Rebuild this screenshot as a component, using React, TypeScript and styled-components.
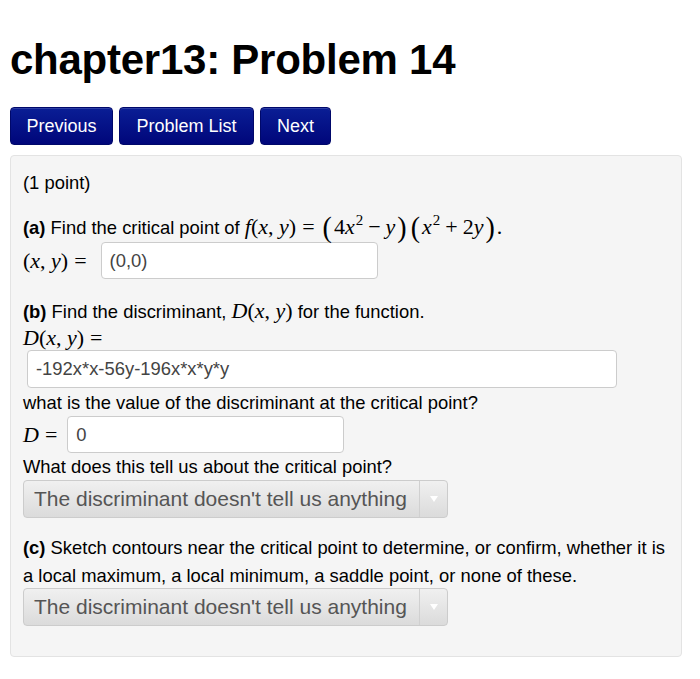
import React from "react";
import styled, { createGlobalStyle } from "styled-components";

const Global = createGlobalStyle`
  html, body { margin: 0; padding: 0; background: #fff; }
  body { font-family: "Liberation Sans", Arial, sans-serif; color: #000; }
`;

const Page = styled.div`
  padding: 0 18px 0 10px;
  width: 700px;
  box-sizing: border-box;
`;

const Title = styled.h1`
  margin: 0;
  padding-top: 37px;
  font-size: 42px;
  line-height: 46px;
  font-weight: bold;
  letter-spacing: -0.25px;
`;

const Nav = styled.div`
  display: flex;
  gap: 6px;
  margin-top: 24px;
`;

const NavButton = styled.button<{ $w: number }>`
  width: ${(p) => p.$w}px;
  height: 38px;
  border: 1px solid #00086a;
  border-radius: 4px;
  background: linear-gradient(#0a1e95, #00067a);
  color: #fff;
  font-family: "Liberation Sans", Arial, sans-serif;
  font-size: 18px;
  padding: 0;
  box-shadow: inset 0 1px 0 rgba(255, 255, 255, 0.15);
`;

const Panel = styled.div`
  margin-top: 10px;
  background: #f5f5f5;
  border: 1px solid #e3e3e3;
  border-radius: 4px;
  padding: 14px 15px 30px 12px;
  font-size: 18.4px;
  line-height: 26px;
`;

const Para = styled.div<{ $mt?: number; $lh?: number }>`
  margin-top: ${(p) => p.$mt ?? 0}px;
  ${(p) => (p.$lh ? `line-height: ${p.$lh}px;` : "")}
`;

const Math = styled.span`
  font-family: "Liberation Serif", "Times New Roman", serif;
  font-size: 22px;
`;

const I = styled.i`
  font-style: italic;
`;

const BigParen = styled.span`
  font-family: "Liberation Serif", serif;
  font-size: 28px;
  display: inline-block;
  transform: scaleY(1.08);
  vertical-align: -2px;
  line-height: 20px;
  padding: 0 2px;
`;

const Op = styled.span<{ $pad?: number }>`
  padding: 0 ${(p) => p.$pad ?? 6}px;
`;

const Row = styled.div<{ $mt?: number; $gap?: number }>`
  display: flex;
  align-items: center;
  gap: ${(p) => p.$gap ?? 6}px;
  margin-top: ${(p) => p.$mt ?? 0}px;
`;

const Input = styled.div<{ $w: number; $ml?: number; $h?: number }>`
  width: ${(p) => p.$w}px;
  height: ${(p) => p.$h ?? 37}px;
  box-sizing: border-box;
  margin-left: ${(p) => p.$ml ?? 0}px;
  background: #fff;
  border: 1px solid #ccc;
  border-radius: 4px;
  padding: 0 8px;
  display: flex;
  align-items: center;
  font-size: 18.4px;
  color: #444;
`;

const Select = styled.div<{ $mt?: number }>`
  width: 425px;
  height: 38px;
  box-sizing: border-box;
  border: 1px solid #ccc;
  border-radius: 4px;
  background: linear-gradient(#f0f0f0, #dbdbdb);
  display: flex;
  align-items: stretch;
  margin-top: ${(p) => p.$mt ?? 0}px;
`;

const SelectText = styled.div`
  flex: 1;
  display: flex;
  align-items: center;
  padding-left: 10px;
  font-size: 21px;
  color: #555;
`;

const SelectArrow = styled.div`
  width: 27px;
  border-left: 1px solid #d0d0d0;
  display: flex;
  align-items: center;
  justify-content: center;
  &::after {
    content: "";
    border-left: 4px solid transparent;
    border-right: 4px solid transparent;
    border-top: 6px solid #fff;
  }
`;

const Sup = styled.sup`
  font-size: 15px;
  vertical-align: 9px;
  line-height: 0;
  padding-left: 1px;
`;

export default function App() {
  return (
    <>
      <Global />
      <Page>
        <Title>chapter13: Problem 14</Title>
        <Nav>
          <NavButton $w={103}>Previous</NavButton>
          <NavButton $w={135}>Problem List</NavButton>
          <NavButton $w={71}>Next</NavButton>
        </Nav>
        <Panel>
          <Para>(1 point)</Para>
          <Para $mt={18}>
            <b>(a)</b> Find the critical point of{" "}
            <Math>
              <I>f</I>(<I>x</I>, <I>y</I>)<Op>=</Op>
              <BigParen>(</BigParen>4<I>x</I>
              <Sup>2</Sup>
              <Op $pad={5}>−</Op>
              <I>y</I>
              <BigParen>)</BigParen>
              <BigParen>(</BigParen>
              <I>x</I>
              <Sup>2</Sup>
              <Op $pad={5}>+</Op>2<I>y</I>
              <BigParen>)</BigParen>.
            </Math>
          </Para>
          <Row $mt={1} $gap={8}>
            <Math>
              (<I>x</I>, <I>y</I>)<Op>=</Op>
            </Math>
            <Input $w={277} $ml={0}>(0,0)</Input>
          </Row>
          <Para $mt={19}>
            <b>(b)</b> Find the discriminant,{" "}
            <Math>
              <I>D</I>(<I>x</I>, <I>y</I>)
            </Math>{" "}
            for the function.
          </Para>
          <Para>
            <Math>
              <I>D</I>(<I>x</I>, <I>y</I>)<Op>=</Op>
            </Math>
          </Para>
          <Row $mt={-2}>
            <Input $w={590} $ml={4} $h={38}>-192x*x-56y-196x*x*y*y</Input>
          </Row>
          <Para $mt={2}>what is the value of the discriminant at the critical point?</Para>
          <Row $mt={0} $gap={4}>
            <Math>
              <I>D</I>
              <Op>=</Op>
            </Math>
            <Input $w={277}>0</Input>
          </Row>
          <Para $mt={1}>What does this tell us about the critical point?</Para>
          <Select $mt={0}>
            <SelectText>The discriminant doesn't tell us anything</SelectText>
            <SelectArrow />
          </Select>
          <Para $mt={16} $lh={28}>
            <b>(c)</b> Sketch contours near the critical point to determine, or confirm, whether it is a
            local maximum, a local minimum, a saddle point, or none of these.
          </Para>
          <Select $mt={-2}>
            <SelectText>The discriminant doesn't tell us anything</SelectText>
            <SelectArrow />
          </Select>
        </Panel>
      </Page>
    </>
  );
}
